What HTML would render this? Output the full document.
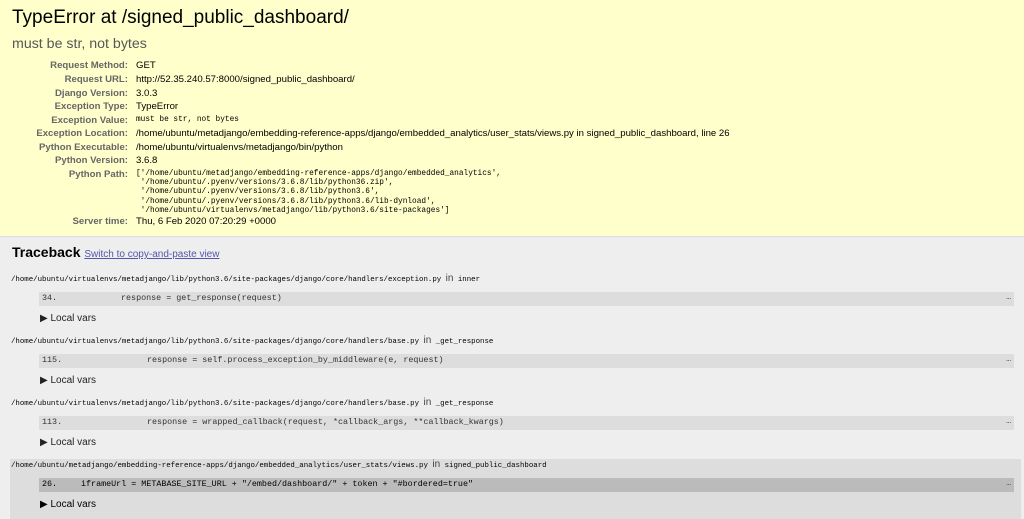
<!DOCTYPE html>
<html><head><meta charset="utf-8"><style>
*{margin:0;padding:0}
body{width:1024px;height:519px;overflow:hidden;background:#eee;font-family:"Liberation Sans",Arial,sans-serif;position:relative;color:#000}
.a{position:absolute;white-space:pre}
#sum{position:absolute;left:0;top:0;width:1024px;height:236px;background:#ffc;border-bottom:1px solid #ddd}
.m{font-family:"Liberation Mono","DejaVu Sans Mono",monospace}
.lb{position:absolute;right:896px;font-size:9.6px;font-weight:bold;color:#666;white-space:pre;text-align:right}
.v{position:absolute;left:136px;font-size:9.6px;white-space:pre}
.fn{font-size:7.4px;color:#000}
.fn span{font-family:"Liberation Sans",sans-serif;font-size:10px;color:#444}
.cb{position:absolute;left:39px;width:975px;height:14px;background:#ddd}
.cb .n{position:absolute;left:3px;top:1px;font-size:8.4px;color:#333}
.cb .c{position:absolute;top:1px;font-size:8.4px;color:#333}
.cb .d{position:absolute;right:3px;top:1px;font-size:8px;color:#333}
.lv{font-size:10px;color:#222}
</style></head><body>
<div id="sum"></div>
<div class="a" style="left:12px;top:7px;font-size:19px">TypeError at /signed_public_dashboard/</div>
<div class="a" style="left:12px;top:36px;font-size:14.2px;color:#575757">must be str, not bytes</div>
<div class="lb" style="top:60px">Request Method:</div><div class="v" style="top:60px">GET</div>
<div class="lb" style="top:74px">Request URL:</div><div class="v" style="top:74px">http://52.35.240.57:8000/signed_public_dashboard/</div>
<div class="lb" style="top:88px">Django Version:</div><div class="v" style="top:88px">3.0.3</div>
<div class="lb" style="top:101px">Exception Type:</div><div class="v" style="top:101px">TypeError</div>
<div class="lb" style="top:115px">Exception Value:</div><div class="v m" style="top:116px;font-size:7.8px">must be str, not bytes</div>
<div class="lb" style="top:128px">Exception Location:</div><div class="v" style="top:128px">/home/ubuntu/metadjango/embedding-reference-apps/django/embedded_analytics/user_stats/views.py in signed_public_dashboard, line 26</div>
<div class="lb" style="top:142px">Python Executable:</div><div class="v" style="top:142px">/home/ubuntu/virtualenvs/metadjango/bin/python</div>
<div class="lb" style="top:155px">Python Version:</div><div class="v" style="top:155px">3.6.8</div>
<div class="lb" style="top:169px">Python Path:</div><div class="v m" style="top:170px;font-size:7.8px;line-height:9.2px">['/home/ubuntu/metadjango/embedding-reference-apps/django/embedded_analytics',
 '/home/ubuntu/.pyenv/versions/3.6.8/lib/python36.zip',
 '/home/ubuntu/.pyenv/versions/3.6.8/lib/python3.6',
 '/home/ubuntu/.pyenv/versions/3.6.8/lib/python3.6/lib-dynload',
 '/home/ubuntu/virtualenvs/metadjango/lib/python3.6/site-packages']</div>
<div class="lb" style="top:216px">Server time:</div><div class="v" style="top:216px">Thu, 6 Feb 2020 07:20:29 +0000</div>

<div class="a" style="left:12px;top:244px;font-size:14px;font-weight:bold">Traceback <span style="font-size:10px;font-weight:normal;color:#55a;text-decoration:underline">Switch to copy-and-paste view</span></div>

<div style="position:absolute;left:10px;top:459px;width:1011px;height:60px;background:#ddd"></div>

<div class="a m fn" style="left:11px;top:273px">/home/ubuntu/virtualenvs/metadjango/lib/python3.6/site-packages/django/core/handlers/exception.py <span>in</span> inner</div>
<div class="cb m" style="top:292px"><span class="n">34.</span><span class="c" style="left:82px">response = get_response(request)</span><span class="d">…</span></div>
<div class="a lv" style="left:40px;top:313px">▶ Local vars</div>

<div class="a m fn" style="left:11px;top:335px">/home/ubuntu/virtualenvs/metadjango/lib/python3.6/site-packages/django/core/handlers/base.py <span>in</span> _get_response</div>
<div class="cb m" style="top:354px"><span class="n">115.</span><span class="c" style="left:108px">response = self.process_exception_by_middleware(e, request)</span><span class="d">…</span></div>
<div class="a lv" style="left:40px;top:375px">▶ Local vars</div>

<div class="a m fn" style="left:11px;top:397px">/home/ubuntu/virtualenvs/metadjango/lib/python3.6/site-packages/django/core/handlers/base.py <span>in</span> _get_response</div>
<div class="cb m" style="top:416px"><span class="n">113.</span><span class="c" style="left:108px">response = wrapped_callback(request, *callback_args, **callback_kwargs)</span><span class="d">…</span></div>
<div class="a lv" style="left:40px;top:437px">▶ Local vars</div>

<div class="a m fn" style="left:11px;top:459px">/home/ubuntu/metadjango/embedding-reference-apps/django/embedded_analytics/user_stats/views.py <span>in</span> signed_public_dashboard</div>
<div class="cb m" style="top:478px;background:#bbb"><span class="n" style="color:#000">26.</span><span class="c" style="left:42px;color:#000">iframeUrl = METABASE_SITE_URL + "/embed/dashboard/" + token + "#bordered=true"</span><span class="d">…</span></div>
<div class="a lv" style="left:40px;top:499px;color:#000">▶ Local vars</div>
</body></html>
